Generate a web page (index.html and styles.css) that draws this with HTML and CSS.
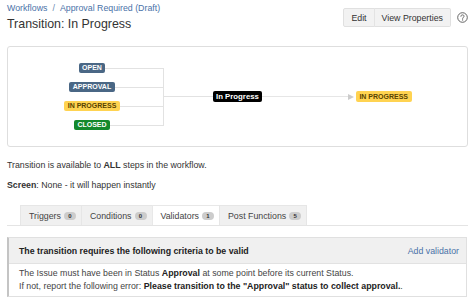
FILE: index.html
```html
<!DOCTYPE html>
<html>
<head>
<meta charset="utf-8">
<link rel="stylesheet" href="styles.css">
</head>
<body>
<div class="page">
  <header class="head">
    <div class="head-left">
      <div class="crumbs"><a>Workflows</a><span class="sep">/</span><a>Approval Required (Draft)</a></div>
      <h1 class="title">Transition: In Progress</h1>
    </div>
    <div class="head-right">
      <div class="btn-group">
        <button class="btn">Edit</button>
        <button class="btn">View Properties</button>
      </div>
      <svg class="help" width="11" height="11" viewBox="0 0 11 11">
        <circle cx="5.5" cy="5.5" r="4.8" fill="none" stroke="#555" stroke-width="0.9"/>
        <path d="M3.9 4.3 C3.9 3.4 4.6 2.9 5.5 2.9 C6.4 2.9 7.1 3.5 7.1 4.2 C7.1 5.2 5.6 5.3 5.6 6.4" fill="none" stroke="#555" stroke-width="0.9" stroke-linecap="round"/>
        <circle cx="5.6" cy="7.9" r="0.6" fill="#555"/>
      </svg>
    </div>
  </header>

  <div class="diagram">
    <div class="sources">
      <div class="src-row"><span class="cell"><span class="loz loz-blue">OPEN</span></span></div>
      <div class="src-row"><span class="cell"><span class="loz loz-blue">APPROVAL</span></span></div>
      <div class="src-row"><span class="cell"><span class="loz loz-yellow">IN PROGRESS</span></span></div>
      <div class="src-row"><span class="cell"><span class="loz loz-green">CLOSED</span></span></div>
    </div>
    <div class="mid-line"></div>
    <span class="trans-label">In Progress</span>
    <div class="long-line"></div>
    <svg class="arrow" width="6" height="6" viewBox="0 0 6 6"><path d="M0 0 L6 3 L0 6 Z" fill="#ccc"/></svg>
    <span class="loz loz-yellow target">IN PROGRESS</span>
  </div>

  <p class="info">Transition is available to <b>ALL</b> steps in the workflow.</p>
  <p class="info screen"><b>Screen</b>: None - it will happen instantly</p>

  <nav class="tabs">
    <div class="tab">Triggers <span class="badge">0</span></div>
    <div class="tab">Conditions <span class="badge">0</span></div>
    <div class="tab active">Validators <span class="badge">1</span></div>
    <div class="tab">Post Functions <span class="badge">5</span></div>
  </nav>

  <section class="panel">
    <div class="panel-head">
      <strong>The transition requires the following criteria to be valid</strong>
      <a class="add">Add validator</a>
    </div>
    <div class="panel-body">
      <div>The Issue must have been in Status <b>Approval</b> at some point before its current Status.</div>
      <div>If not, report the following error: <b>Please transition to the "Approval" status to collect approval.</b>.</div>
    </div>
  </section>
</div>
</body>
</html>
```

FILE: styles.css
```css
* { box-sizing: border-box; }
body {
  margin: 0;
  font-family: "Liberation Sans", Arial, sans-serif;
  font-size: 8.8px;
  color: #333;
  background: #fff;
}
.page {
  padding: 2px 6px 0 7px;
}
.head {
  display: flex;
  justify-content: space-between;
  align-items: flex-start;
}
.crumbs {
  line-height: 12px;
  color: #4a72a8;
}
.crumbs .sep {
  margin: 0 5px;
  color: #6a88b0;
}
.title {
  margin: 0;
  font-size: 12.4px;
  font-weight: normal;
  line-height: 20px;
  color: #333;
}
.head-right {
  display: flex;
  align-items: center;
  gap: 6px;
  margin-top: 6px;
}
.btn-group {
  display: flex;
}
.btn {
  font-family: inherit;
  font-size: 8.8px;
  color: #333;
  background: #f2f2f2;
  border: 1px solid #e0e0e0;
  height: 19px;
  padding: 0 7px;
  margin: 0;
}
.btn + .btn { border-left: 1px solid #e3e3e3; margin-left: -1px; }
.btn:first-child { border-radius: 2px 0 0 2px; }
.btn:last-child { border-radius: 0 2px 2px 0; }
.help { display: block; }

.diagram {
  margin-top: 12px;
  height: 101px;
  border: 1px solid #dedede;
  border-radius: 3px;
  display: flex;
  align-items: center;
  padding-left: 56px;
}
.sources {
  width: 100px;
  display: flex;
  flex-direction: column;
  background: linear-gradient(#e2e2e2, #e2e2e2) no-repeat right center / 1px calc(100% - 19px);
}
.src-row {
  height: 19px;
  display: flex;
  align-items: center;
  background: linear-gradient(#e2e2e2, #e2e2e2) no-repeat right center / calc(100% - 28px) 1px;
}
.cell {
  width: 56px;
  display: flex;
  justify-content: center;
}
.loz {
  display: inline-block;
  font-size: 7px;
  font-weight: bold;
  line-height: 10px;
  padding: 0 3.5px;
  border-radius: 2px;
  white-space: nowrap;
}
.loz-blue { background: #4a6785; color: #fff; }
.loz-yellow { background: #ffd351; color: #594300; }
.loz-green { background: #14892c; color: #fff; }
.mid-line {
  width: 49px;
  height: 1px;
  background: #e2e2e2;
}
.trans-label {
  background: #000;
  color: #fff;
  font-weight: bold;
  font-size: 7.8px;
  line-height: 11px;
  padding: 0 3px;
  border-radius: 2px;
}
.long-line {
  width: 86px;
  height: 1px;
  background: #e6e6e6;
}
.arrow { display: block; margin-right: 2px; }
.target { line-height: 11px; }

.info {
  margin: 12px 0 0 0;
  line-height: 12px;
}
.info.screen { margin-top: 8px; }

.tabs {
  margin-top: 14px;
  padding-left: 13px;
  display: flex;
  border-bottom: 1px solid #e4e4e4;
}
.tab {
  height: 20px;
  display: flex;
  align-items: center;
  gap: 3px;
  padding: 0 5px 0 8px;
  background: #f0f0f0;
  border: 1px solid #e6e6e6;
  border-bottom: none;
  margin-right: -1px;
  color: #444;
}
.tab.active {
  background: #fff;
  border-color: #e8e8e8;
}
.badge {
  display: inline-block;
  min-width: 12px;
  height: 8px;
  line-height: 8px;
  border-radius: 4px;
  background: #ccc;
  color: #333;
  font-size: 6px;
  font-weight: bold;
  text-align: center;
}

.panel {
  margin-top: 11px;
  margin-right: 1px;
  border: 1px solid #e0e0e0;
  border-left: 2px solid #c4c4c4;
}
.panel-head {
  height: 26px;
  display: flex;
  align-items: center;
  justify-content: space-between;
  padding: 0 7px 0 10px;
  background: #f0f0f0;
  border-bottom: 1px solid #e2e2e2;
  color: #222;
}
.add { color: #4a72a8; }
.panel-body {
  padding: 3px 10px 3px 10px;
  line-height: 13px;
  color: #444;
}
.panel-body b { color: #222; }
```
